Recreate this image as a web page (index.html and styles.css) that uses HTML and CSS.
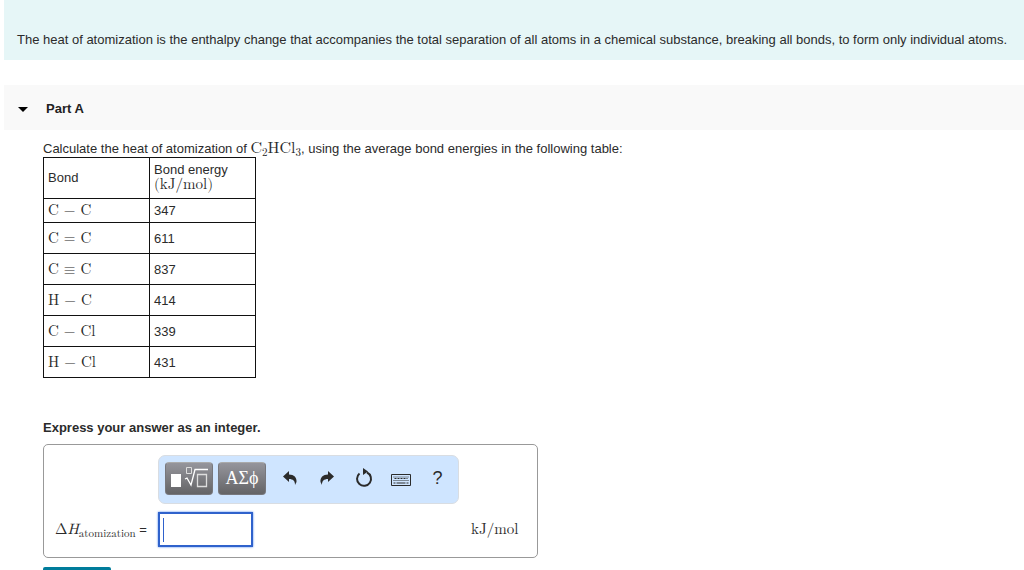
FILE: index.html
```html
<!DOCTYPE html>
<html lang="en">
<head>
  <meta charset="utf-8">
  <title>Part A</title>
  <link rel="stylesheet" href="styles.css">
</head>
<body>
  <div class="intro">
    <p>The heat of atomization is the enthalpy change that accompanies the total separation of all atoms in a chemical substance, breaking all bonds, to form only individual atoms.</p>
  </div>

  <div class="part-header">
    <svg class="arrow" width="10" height="5" viewBox="0 0 10 5"><path d="M0 0h10L5 5z"/></svg>
    <h2>Part A</h2>
  </div>

  <div class="content">
    <p class="question">Calculate the heat of atomization of <span class="math formula">C<sub>2</sub>HCl<sub>3</sub></span>, using the average bond energies in the following table:</p>

    <table class="bonds">
      <tr class="head">
        <th>Bond</th>
        <th>Bond energy<br><span class="math">(kJ/mol)</span></th>
      </tr>
      <tr class="first"><td class="math">C − C</td><td>347</td></tr>
      <tr><td class="math">C = C</td><td>611</td></tr>
      <tr><td class="math">C ≡ C</td><td>837</td></tr>
      <tr><td class="math">H − C</td><td>414</td></tr>
      <tr><td class="math">C − Cl</td><td>339</td></tr>
      <tr><td class="math">H − Cl</td><td>431</td></tr>
    </table>

    <p class="instructions">Express your answer as an integer.</p>

    <form>
      <div class="answer-box">
        <!-- Equation toolbar -->
        <div class="toolbar">
          <button type="button" class="palette" aria-label="Templates">
            <svg width="38" height="22" viewBox="0 0 38 22" fill="none" stroke="#fff">
              <path d="M1 7h10v13H1z" fill="#fff" stroke="none"/>
              <path d="M16.500.5h5v6h-5z" stroke="#ddd"/>
              <path d="M15 12l2-1 4 7 4-15.500h13" stroke-width="1.300"/>
              <path d="M27.500 7.500h9v12h-9z" stroke="#ddd" stroke-width="1.300"/>
            </svg>
          </button>
          <button type="button" class="palette">ΑΣϕ</button>
          <button type="button" class="tool" aria-label="Undo">
            <svg width="14" height="14" viewBox="0 0 14 14"><path d="M0 5.500L6 0v3.500c5 0 8 3 7.500 7.500l-1.500 3c.2-4-2-6-6-6V11z"/></svg>
          </button>
          <button type="button" class="tool" aria-label="Redo">
            <svg width="14" height="14" viewBox="0 0 14 14"><path d="M14 5.500L8 0v3.500c-5 0-8 3-7.500 7.500l1.500 3c-.2-4 2-6 6-6V11z"/></svg>
          </button>
          <button type="button" class="tool" aria-label="Reset">
            <svg width="18" height="20" viewBox="0 0 18 20"><path d="M12 4.500A7 7 0 1 1 4.500 5.500" fill="none" stroke="#2b2b2b" stroke-width="2"/><path d="M8 0l5 3.500L8 7z"/></svg>
          </button>
          <button type="button" class="tool" aria-label="Keyboard">
            <svg class="keyboard" width="20" height="12" viewBox="0 0 20 12" fill="none" stroke="#2b2b2b">
              <path d="M.5.5h19v11H.5z"/>
              <path d="M2.500 3h15" stroke-dasharray="1 1"/>
              <path d="M3.500 4.500h13" stroke-dasharray="2 1"/>
              <path d="M2.500 6.500h15" stroke-dasharray="1 1"/>
              <path d="M2.500 9h2M5.500 9h9M15.500 9h2"/>
            </svg>
          </button>
          <button type="button" class="tool help" aria-label="Help">?</button>
        </div>

        <label for="answer"><span class="math">Δ<i>H</i><sub>atomization</sub></span> =</label>
        <input type="text" id="answer" name="answer">
        <span class="math unit">kJ/mol</span>
      </div>
      <button type="submit" class="submit" aria-label="Submit"></button>
    </form>
  </div>
</body>
</html>
```
FILE: styles.css
```css
body {
  margin: 0 0 0 4px;
  font-family: "Liberation Sans", Arial, sans-serif;
  font-size: 13px;
  line-height: 16px;
  color: #2b2b2b;
  background-color: #fff;
}
p, h2 {
  margin: 0;
}
.intro {
  padding: 32px 13px 12px;
  background-color: #e6f6f7;
}
.part-header {
  display: flex;
  align-items: center;
  gap: 18px;
  margin-top: 25px;
  padding: 16px 14px 13px;
  background-color: #f9f9f9;
}
.part-header h2 {
  font-size: 13px;
  color: #222;
}
.content {
  padding: 10px 39px 0;
}
/* Formulas and units */
.math {
  font-family: "Latin Modern Math", "Liberation Serif", "Times New Roman", serif;
  font-size: 15px;
}
.math sub {
  font-size: 11px;
  line-height: 0;
  vertical-align: -3px;
}
.formula {
  font-size: 16px;
}
.question {
  line-height: 17px;
}
.bonds {
  width: 213px;
  table-layout: fixed;
  border-collapse: collapse;
}
.bonds th, .bonds td {
  height: 30px;
  padding: 0 4px;
  border: 1px solid #111;
  text-align: left;
  font-weight: normal;
  line-height: 15px;
}
.bonds .head th {
  height: 38px;
  padding-bottom: 2px;
}
.bonds .first td {
  height: 23px;
}
.instructions {
  margin: 42px 0 8px;
  font-weight: bold;
}
.answer-box {
  display: grid;
  grid-template-columns: 91px 301px auto;
  align-items: center;
  gap: 8px 12px;
  box-sizing: border-box;
  max-width: 495px;
  padding: 10px 11px;
  border: 1px solid #999;
  border-radius: 5px;
}
.toolbar {
  grid-column: 2;
  display: flex;
  align-items: center;
  box-sizing: border-box;
  height: 49px;
  padding: 0 6px 3px;
  border: 1px solid #d9dde2;
  border-radius: 7px;
  background-color: #cfe5ff;
}
button {
  padding: 0;
  border: none;
  background: none;
  cursor: pointer;
}
.palette {
  display: flex;
  flex-shrink: 0;
  align-items: center;
  justify-content: center;
  width: 48px;
  height: 33px;
  margin-right: 5px;
  border: 1px solid #77777c;
  border-top-color: #aaa;
  border-radius: 4px;
  background: linear-gradient(#95959c, #646466);
  color: #fff;
  font-family: "Liberation Serif", serif;
  font-size: 18px;
}
.tool {
  display: flex;
  flex-shrink: 0;
  align-items: center;
  justify-content: center;
  width: 37px;
  height: 33px;
}
.tool svg {
  fill: #2b2b2b;
}
.tool .keyboard {
  fill: none;
  margin-top: 4px;
}
.help {
  font-family: "Liberation Sans", Arial, sans-serif;
  font-size: 18px;
  color: #2b2b2b;
}
.answer-box label {
  grid-column: 1;
  white-space: nowrap;
}
#answer {
  box-sizing: border-box;
  width: 95px;
  height: 35px;
  padding: 0 6px;
  border: 2px solid #2f62cc;
  outline: none;
  box-shadow: 0 0 2px #4d86ee;
  /* text cursor */
  background: linear-gradient(#2f62cc, #2f62cc) 3px center / 1px 24px no-repeat #fff;
}
.submit {
  display: block;
  width: 68px;
  height: 32px;
  margin-top: 9px;
  border-radius: 2px;
  background-color: #007c9b;
}
```
